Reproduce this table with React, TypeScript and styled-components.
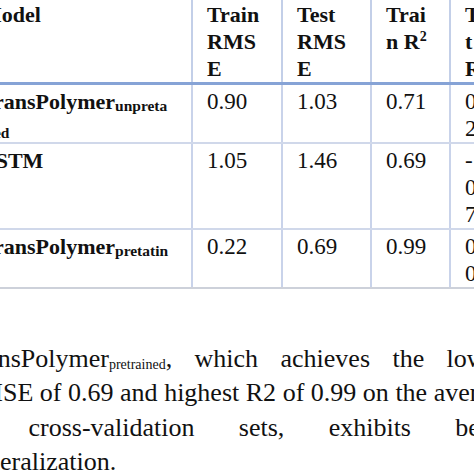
import React from "react";
import styled, { createGlobalStyle } from "styled-components";

const Global = createGlobalStyle`
  html, body { margin: 0; padding: 0; background: #ffffff; }
  body { width: 474px; height: 474px; overflow: hidden; }
`;

const Page = styled.div`
  width: 474px;
  height: 474px;
  overflow: hidden;
  background: #ffffff;
  color: #111111;
  font-family: "Liberation Serif", "Times New Roman", serif;
`;

const Table = styled.table`
  border-collapse: collapse;
  table-layout: fixed;
  width: 554px;
  margin-left: -34px;
`;

const Head = styled.th<{ $first?: boolean }>`
  font-weight: bold;
  font-size: 22px;
  line-height: 27px;
  text-align: left;
  vertical-align: top;
  padding: 1px 14px 0 ${(p) => (p.$first ? "15px" : "14px")};
  border-left: ${(p) => (p.$first ? "none" : "2px solid #c3cfe8")};
  border-bottom: 3px solid #86a3d6;
`;

const Cell = styled.td<{ $first?: boolean; $last?: boolean }>`
  font-size: ${(p) => (p.$first ? "22px" : "23px")};
  font-weight: ${(p) => (p.$first ? "bold" : "normal")};
  line-height: 27px;
  text-align: left;
  vertical-align: top;
  padding: 3px 14px 0 ${(p) => (p.$first ? "15px" : "14px")};
  border-left: ${(p) => (p.$first ? "none" : "2px solid #c9d3ea")};
  border-bottom: 2px solid ${(p) => (p.$last ? "#cdd1da" : "#d0d8ea")};
  white-space: nowrap;
`;

const Sub = styled.sub`
  font-size: 15.5px;
  vertical-align: -2px;
  line-height: 0;
`;

const Sup = styled.sup`
  font-size: 14px;
  vertical-align: 8px;
  line-height: 0;
`;

const Paragraph = styled.div`
  width: 552px;
  margin: 53px 0 0 -37.5px;
  font-size: 26px;
  line-height: 34.3px;
`;

const Line = styled.div<{ $last?: boolean }>`
  text-align: ${(p) => (p.$last ? "left" : "justify")};
  text-align-last: ${(p) => (p.$last ? "left" : "justify")};
`;

const TextSub = styled.sub`
  font-size: 14px;
  vertical-align: -2px;
  line-height: 0;
`;

type Row = { name: React.ReactNode; cells: React.ReactNode[] };

const rows: Row[] = [
  {
    name: (
      <>
        TransPolymer<Sub>unpreta</Sub>
        <br />
        <Sub>ined</Sub>
      </>
    ),
    cells: ["0.90", "1.03", "0.71", <>0.<br />22</>],
  },
  {
    name: "LSTM",
    cells: ["1.05", "1.46", "0.69", <>-<br />0.<br />70</>],
  },
  {
    name: (
      <>
        TransPolymer<Sub>pretatin</Sub>
      </>
    ),
    cells: ["0.22", "0.69", "0.99", <>0.<br />00</>],
  },
];

export default function App() {
  return (
    <Page>
      <Global />
      <Table>
        <colgroup>
          <col style={{ width: 226 }} />
          <col style={{ width: 90 }} />
          <col style={{ width: 89 }} />
          <col style={{ width: 79 }} />
          <col style={{ width: 70 }} />
        </colgroup>
        <thead>
          <tr>
            <Head $first>Model</Head>
            <Head>
              Train
              <br />
              RMS
              <br />E
            </Head>
            <Head>
              Test
              <br />
              RMS
              <br />E
            </Head>
            <Head>
              Trai
              <br />n R<Sup>2</Sup>
            </Head>
            <Head>
              Tes
              <br />t<br />R<Sup>2</Sup>
            </Head>
          </tr>
        </thead>
        <tbody>
          {rows.map((r, i) => (
            <tr key={i}>
              <Cell $first $last={i === rows.length - 1}>
                {r.name}
              </Cell>
              {r.cells.map((c, j) => (
                <Cell key={j} $last={i === rows.length - 1}>
                  {c}
                </Cell>
              ))}
            </tr>
          ))}
        </tbody>
      </Table>
      <Paragraph>
        <Line>
          TransPolymer<TextSub>pretrained</TextSub>, which achieves the lowest
        </Line>
        <Line>RMSE of 0.69 and highest R2 of 0.99 on the average</Line>
        <Line>of cross-validation sets, exhibits better</Line>
        <Line $last>generalization.</Line>
      </Paragraph>
    </Page>
  );
}
